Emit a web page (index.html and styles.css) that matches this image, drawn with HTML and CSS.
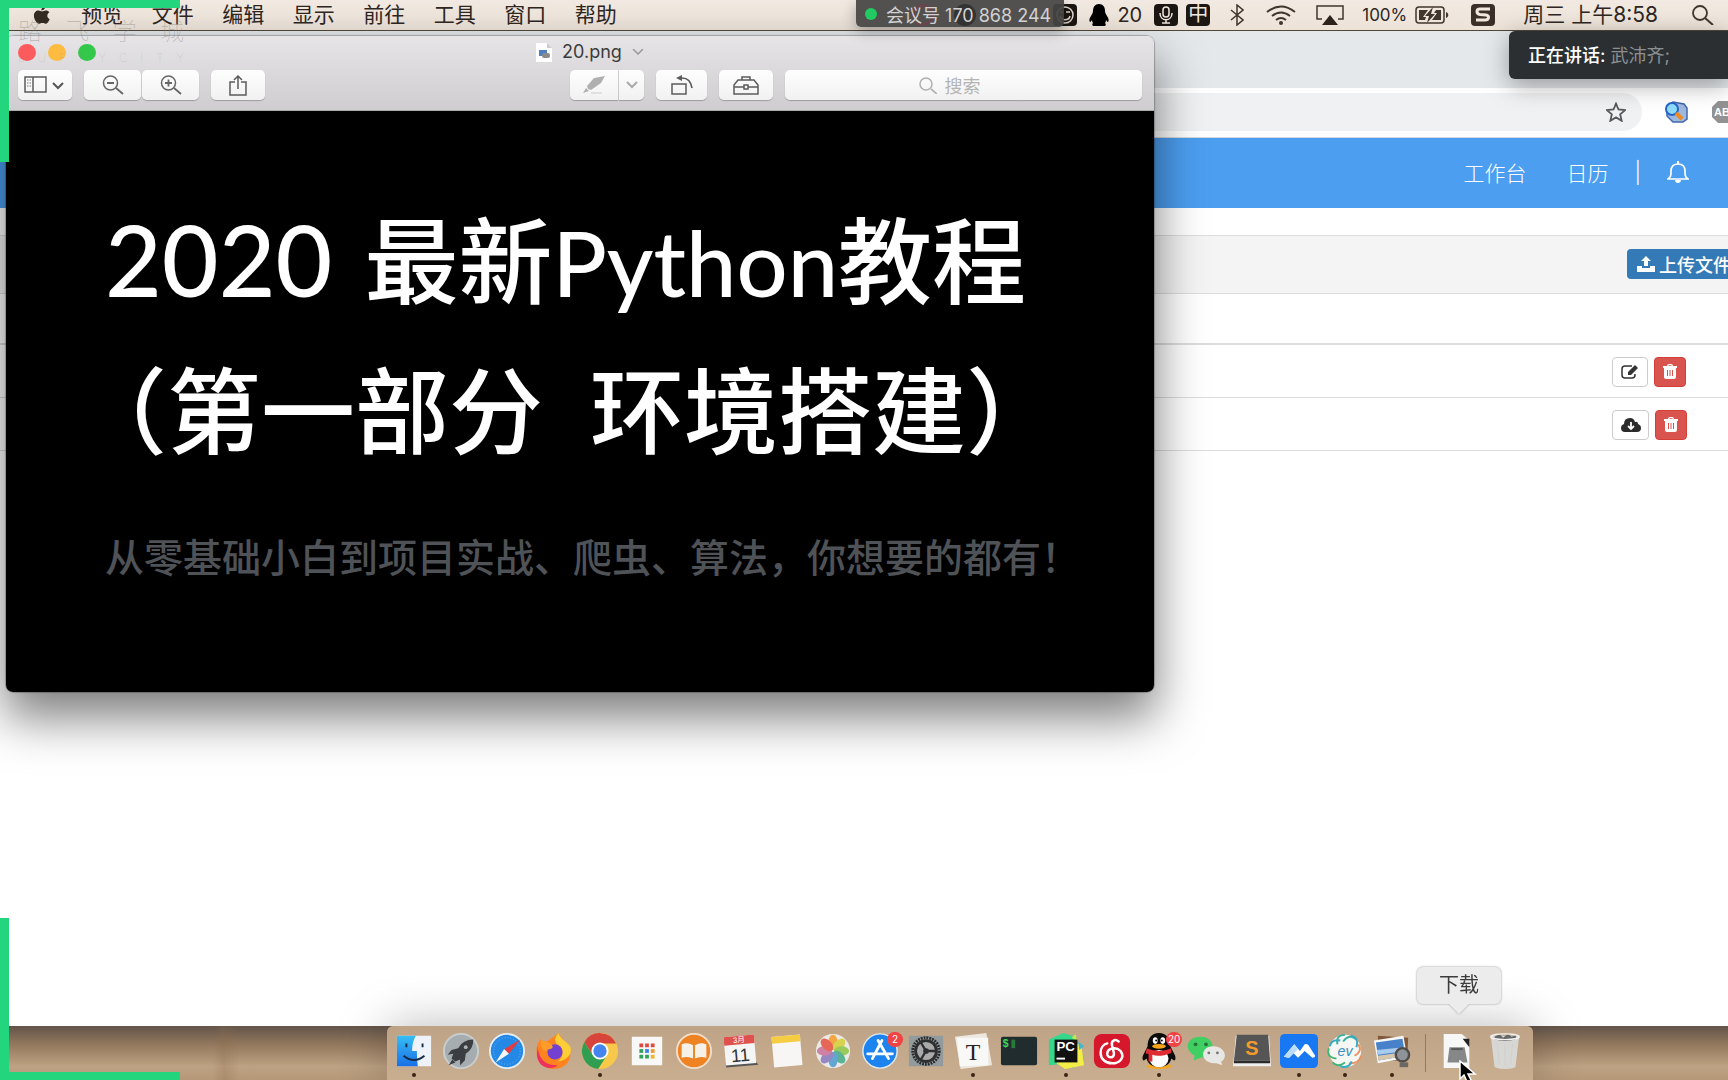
FILE: index.html
```html
<!DOCTYPE html>
<html lang="zh-CN">
<head>
<meta charset="utf-8">
<title>20.png</title>
<link rel="stylesheet" href="styles.css">
</head>
<body>
<div class="desktop">
  <header class="menubar">
    <svg class="apple" viewBox="0 0 20 20"><path d="M13.6 0c.2 1.600-.5 2.800-1.300 3.700-.8.800-1.900 1.400-3 1.300-.1-1.400.5-2.600 1.300-3.400C11.300.700 12.600.100 13.600 0zM18.500 14.600c-.9 2.200-2.500 5.200-4.600 5.200-1.200 0-1.700-.8-3.400-.8s-2.200.8-3.300.8C4.400 19.800 1 14.800 1 10.700c0-3.500 2.400-5.700 5.100-5.700 1.600 0 2.800 1 3.900 1s2.500-1.100 4.400-1.100c1.500 0 2.900.7 3.800 2-3.300 2-2.800 6.400.3 7.700z"/></svg>
    <nav class="menus">
      <button>预览</button><button>文件</button><button>编辑</button><button>显示</button><button>前往</button><button>工具</button><button>窗口</button><button>帮助</button>
    </nav>
    <div class="status">
      <svg width="24" height="22" viewBox="0 0 24 22"><rect width="24" height="22" rx="4" fill="#1c1712"/><circle cx="12" cy="11" r="8" fill="none" stroke="#e8dfd5" stroke-width="1.500"/><path d="M7 12c1 5 9 5 10 0M13 8h4M7 8h3" fill="none" stroke="#e8dfd5" stroke-width="1.500"/></svg>
      <svg class="g12" width="20" height="22" viewBox="0 0 20 22"><path fill="#000" d="M10 0c4 0 6 3 6 7 0 2 1 3 2 5 2 3 2 5 1 6-1 0-1-1-2-2 0 2-1 3-1 3 1 1 1 2 0 3H4c-1-1-1-2 0-3 0 0-1-1-1-3-1 1-1 2-2 2-1-1-1-3 1-6 1-2 2-3 2-5 0-4 2-7 6-7z"/></svg>
      <span class="g8 latin">20</span>
      <svg class="g12" width="24" height="22" viewBox="0 0 24 22"><rect width="24" height="22" rx="4" fill="#1c1712"/><rect x="9" y="3" width="6" height="10" rx="3" fill="none" stroke="#f0e8df" stroke-width="1.500"/><path d="M6 9c0 9 12 9 12 0M12 16v3M8 19h8" fill="none" stroke="#f0e8df" stroke-width="1.500"/></svg>
      <span class="g8 ime">中</span>
      <svg class="g20" width="14" height="22" viewBox="0 0 14 22"><path d="M1 6l12 10-6 5V1l6 5L1 16" fill="none" stroke="#40362e" stroke-width="1.500"/></svg>
      <svg class="g24" width="30" height="20" viewBox="0 0 30 20"><path d="M1 7Q15-4 29 7M6 11q9-7 18 0M10 15q5-4 10 0" fill="none" stroke="#40362e" stroke-width="2"/><circle cx="15" cy="18" r="2" fill="#40362e"/></svg>
      <svg class="g20" width="28" height="20" viewBox="0 0 28 20"><path d="M6 14H1V1h26v13h-5" fill="none" stroke="#40362e" stroke-width="1.500"/><path d="M14 10l8 10H6z" fill="#2b231c"/></svg>
      <span class="g16 percent">100%</span>
      <svg class="g8" width="34" height="18" viewBox="0 0 34 18"><rect x="1" y="1" width="28" height="16" rx="3" fill="none" stroke="#40362e" stroke-width="1.500"/><path d="M4 4h9l-5 7h3l-1 3H4zM21 4h5v10h-9l5-7h-3z" fill="#40362e"/><path d="M18 1l-8 9h4l-2 7 8-9h-4z" fill="#40362e"/><path d="M31 6c3 1 3 5 0 6z" fill="#40362e"/></svg>
      <svg class="g24" width="24" height="22" viewBox="0 0 24 22"><rect width="24" height="22" rx="4" fill="#3a3029"/><path d="M19 5H9c-4 0-4 5 0 5.500l6 .5c4 .500 3 5-1 5H5" fill="none" stroke="#f0e8df" stroke-width="3"/></svg>
      <span class="g28 clock">周三 上午8:58</span>
      <svg class="g34" width="22" height="20" viewBox="0 0 22 20"><circle cx="8" cy="8" r="7" fill="none" stroke="#40362e" stroke-width="1.800"/><path d="M13 13l8 7" stroke="#40362e" stroke-width="2"/></svg>
    </div>
  </header>

  <main class="browser">
    <div class="tabstrip"></div>
    <div class="addressbar">
      <div class="omnibox"><svg width="20" height="20" viewBox="0 0 24 24"><path d="M12 2l3 7 8 .700-6 5.200 1.800 7.600L12 18.500l-6.800 4L7 14.900 1 9.700 9 9z" fill="none" stroke="#55585c" stroke-width="2.200"/></svg></div>
      <svg class="ext" width="24" height="22" viewBox="0 0 24 22"><path d="M3 5l6-4 11 2 3 4v11l-4 3H9l-6-6z" fill="#9fb9de" stroke="#3f69ad" stroke-width="1.500"/><circle cx="8" cy="8" r="6" fill="#8edcfa" stroke="#2563c9" stroke-width="2"/><path d="M12 12l6 6" stroke="#ed8a22" stroke-width="4"/></svg>
      <svg class="abp" width="24" height="22" viewBox="0 0 24 22"><path d="M6 0h12l6 6v10l-6 6H6l-6-6V6z" fill="#929292"/><text x="2" y="15" font-size="11" font-weight="700" fill="#fff">ABP</text></svg>
    </div>
    <nav class="sitebar">
      <a href="#">工作台</a><a class="cal" href="#">日历</a><span class="bar">|</span>
      <button aria-label="通知"><svg width="22" height="22" viewBox="0 0 22 22"><path d="M1 18c3-2 3-4 3-8 0-5 3-7 7-7s7 2 7 7c0 4 0 6 3 8z" fill="none" stroke="#fff" stroke-width="1.700"/><path d="M8 19h6c0 4-6 4-6 0zM10 0h2v3h-2z" fill="#fff"/></svg></button>
    </nav>
    <section class="panel">
      <div class="panel-head">
        <button class="upload"><svg width="18" height="16" viewBox="0 0 18 16"><path d="M9 0l5 5h-3v5H7V5H4zM0 10h5v2h8v-2h5v6H0z" fill="#fff"/></svg>上传文件</button>
      </div>
      <table class="files">
        <thead><tr><th></th><th class="ops"></th></tr></thead>
        <tbody>
          <tr><td></td><td class="ops"><div class="acts"><button aria-label="编辑"><svg width="18" height="16" viewBox="0 0 18 16"><path d="M11 2H4Q1 2 1 5v6q0 3 3 3h7q3 0 3-3v-1" fill="none" stroke="#333" stroke-width="1.500"/><path d="M7 8l7-7 3 3-7 7H7z" fill="#333"/></svg></button><button class="del" aria-label="删除"><svg width="14" height="15" viewBox="0 0 14 15"><path d="M4 2q0-2 2-2h2q2 0 2 2h4v2h-1v9q0 2-2 2H3q-2 0-2-2V4H0V2zm1.500 0h3V1.300h-3z" fill="#fff"/><path d="M4.500 6v6M7 6v6M9.500 6v6" stroke="#d9534f"/></svg></button></div></td></tr>
          <tr><td></td><td class="ops"><div class="acts"><button class="wide" aria-label="下载"><svg width="20" height="14" viewBox="0 0 20 14"><path d="M4 14q-4 0-4-4 0-3 3-4 0-6 6-6 4 0 5 4 3-1 3 2 3 1 3 4 0 4-4 4z" fill="#2b2b2b"/><path d="M10 4v6M7 8l3 3 3-3" stroke="#fff" stroke-width="1.800" fill="none"/></svg></button><button class="del" aria-label="删除"><svg width="14" height="15" viewBox="0 0 14 15"><path d="M4 2q0-2 2-2h2q2 0 2 2h4v2h-1v9q0 2-2 2H3q-2 0-2-2V4H0V2zm1.500 0h3V1.300h-3z" fill="#fff"/><path d="M4.500 6v6M7 6v6M9.500 6v6" stroke="#d9534f"/></svg></button></div></td></tr>
        </tbody>
      </table>
    </section>
  </main>
  <div class="wallpaper"></div>

  <section class="preview">
    <div class="chrome">
      <div class="titlebar">
        <div class="lights"><button class="red" aria-label="关闭"></button><button class="amber" aria-label="最小化"></button><button class="green" aria-label="缩放"></button></div>
        <div class="title"><svg width="16" height="19" viewBox="0 0 16 19"><path d="M0 0h11l5 5v14H0z" fill="#fff"/><path d="M11 0v5h5z" fill="#ccc"/><rect x="3" y="7" width="8" height="6" fill="#4c80c0"/><rect x="6" y="10" width="8" height="5" rx="2" fill="#8b8b8b"/></svg><span>20.png</span><svg width="12" height="6" viewBox="0 0 12 6"><path d="M1 0l5 5 5-5" fill="none" stroke="#999" stroke-width="1.500"/></svg></div>
      </div>
      <div class="toolbar">
        <button class="tb" aria-label="边栏"><svg width="42" height="18" viewBox="0 0 42 18"><path d="M1 1h21v15H1zM9 1v15" fill="none" stroke="#5b5b5b" stroke-width="1.500"/><path d="M3 4h4M3 7h4M3 10h4" stroke="#777" stroke-dasharray="1.500 1"/><path d="M29 7l5 5 5-5" fill="none" stroke="#555" stroke-width="2"/></svg></button>
        <div class="pair">
          <button class="tb zoomer" aria-label="缩小"><svg width="22" height="20" viewBox="0 0 22 20"><circle cx="8.500" cy="8" r="7" fill="none" stroke="#666" stroke-width="1.500"/><path d="M5 8h7M14 13l7 6" stroke="#666" stroke-width="1.800"/></svg></button>
          <button class="tb zoomer" aria-label="放大"><svg width="22" height="20" viewBox="0 0 22 20"><circle cx="8.500" cy="8" r="7" fill="none" stroke="#666" stroke-width="1.500"/><path d="M5 8h7M8.500 4.500v7M14 13l7 6" stroke="#666" stroke-width="1.800"/></svg></button>
        </div>
        <button class="tb" aria-label="共享"><svg width="18" height="21" viewBox="0 0 18 21"><path d="M6 7H1v13h16V7h-5M9 14V2M5 5l4-4 4 4" fill="none" stroke="#5b5b5b" stroke-width="1.500"/></svg></button>
        <div class="pair right">
          <button class="tb pen" aria-label="高亮"><svg width="22" height="18" viewBox="0 0 22 18"><path d="M22 0L11 2 4 10l1 3 3 1L18 7zM3 12l-3 5 6-2z" fill="#b0b0b0"/><path d="M8 17h11" stroke="#ccc"/></svg></button>
          <button class="tb drop" aria-label="更多"><svg width="12" height="8" viewBox="0 0 12 8"><path d="M1 1l5 5 5-5" fill="none" stroke="#aaa" stroke-width="2"/></svg></button>
        </div>
        <button class="tb rotate" aria-label="旋转"><svg width="22" height="20" viewBox="0 0 22 20"><path d="M1 9h14v10H1z" fill="none" stroke="#5b5b5b" stroke-width="1.500"/><path d="M11 3c6 0 9 4 10 10" fill="none" stroke="#5b5b5b" stroke-width="1.700"/><path d="M11 0v6L5 3z" fill="#5b5b5b"/></svg></button>
        <button class="tb" aria-label="标记"><svg width="26" height="19" viewBox="0 0 26 19"><path d="M1 18V9l4-5h16l4 5v9zM1 11h10M15 11h10M9 4V1h8v3M11 9h4v4h-4z" fill="none" stroke="#5b5b5b" stroke-width="1.500"/></svg></button>
        <label class="search"><svg width="18" height="17" viewBox="0 0 18 17"><circle cx="7" cy="7" r="6" fill="none" stroke="#b0b0b0" stroke-width="1.500"/><path d="M12 12l6 5" stroke="#b0b0b0" stroke-width="1.700"/></svg><input type="text" placeholder="搜索" aria-label="搜索"></label>
      </div>
    </div>
    <div class="slide">
      <h1><span class="year">2020</span>最新<span class="word">Python</span>教程</h1>
      <h1 class="second">（第一部分&ensp;环境搭建）</h1>
      <p>从零基础小白到项目实战、爬虫、算法，你想要的都有！</p>
    </div>
  </section>

  <div class="meeting"><i class="ghost one"></i><i class="ghost two"></i><i class="dot"></i><span>会议号 170 868 244</span></div>
  <div class="talking"><b>正在讲话:</b> 武沛齐;</div>
  <div class="frame top"></div>
  <div class="frame bottom"></div>
  <div class="mark"><div><span>路</span><span>飞</span><span>学</span><span>城</span></div><div class="small"><span>L</span><span>U</span><span>F</span><span>F</span><span>Y</span><span>C</span><span>I</span><span>T</span><span>Y</span></div></div>

  <nav class="dock">
    <div class="apps">
      <button class="on" aria-label="访达"><svg viewBox="0 0 40 40"><defs><linearGradient id="bl" x2="0" y2="1"><stop stop-color="#35bdf5"/><stop offset="1" stop-color="#1a70e6"/></linearGradient></defs><path d="M2 4h36v32H2z" fill="#eef3fa"/><path d="M2 4h20c-3 5-4 10-4 16h5q0 9 1 16H2z" fill="url(#bl)"/><path d="M12 12v4M29 12v4M9 25q11 9 22 0" stroke="#152a45" stroke-width="2" fill="none"/></svg></button>
      <button aria-label="启动台"><svg viewBox="0 0 40 40"><circle cx="20" cy="20" r="18" fill="#a6adb0" stroke="#c9cfd0" stroke-width="2"/><path d="M33 8q-11 0-16 9l-7 2-4 5 6-1-2 5 4 3 5-2 0 6 5-5 1-7q8-5 8-15zM11 29l-4 6 7-3z" fill="#3b3e40"/><circle cx="25" cy="16" r="2" fill="#b1b4b5"/></svg></button>
      <button aria-label="Safari"><svg viewBox="0 0 40 40"><circle cx="20" cy="20" r="18" fill="#2489e6" stroke="#e4edf4" stroke-width="2"/><circle cx="20" cy="20" r="14" fill="none" stroke="#68b7f1" stroke-dasharray="1 2"/><path d="M34 8L22 23l-5-5z" fill="#e63b40"/><path d="M8 32l9-14 5 5z" fill="#f5f5f5"/></svg></button>
      <button aria-label="Firefox"><svg viewBox="0 0 40 40"><path d="M25 1c2 5 5 7 8 11 9 11 3 27-13 27C6 39-2 26 3 12l3-5 2 5 6-3z" fill="#ff8420"/><path d="M25 1c-5 5-5 9-1 13 6 4 7 12 0 17 14-2 18-14 9-20C30 8 26 6 25 1z" fill="#ffce35"/><path d="M3 14c0 9 4 22 21 21-7 6-22 3-22-12z" fill="#ee315c"/><circle cx="21" cy="21" r="8" fill="#7440cf"/><path d="M6 9c7 0 15 5 12 8-3 2-6 0-6 4-5-3-7-7-6-12z" fill="#ff9c28"/></svg></button>
      <button class="on" aria-label="Chrome"><svg viewBox="0 0 40 40"><circle cx="20" cy="20" r="19" fill="#f8c84b"/><path d="M3.500 10.500A19 19 0 0 1 37 12H20a9 9 0 0 0-8 12z" fill="#d7443b"/><path d="M3.500 10.500A19 19 0 0 0 18 39l9-14-15-1z" fill="#2f9e51"/><circle cx="20" cy="20" r="9" fill="#fff"/><circle cx="20" cy="20" r="7" fill="#4384ef"/></svg></button>
      <button aria-label="应用"><svg viewBox="0 0 40 40"><path d="M4 5h32v30H4z" fill="#f8f8f8"/><g stroke-width="4" fill="none" stroke-dasharray="4 2"><path d="M12 14h16" stroke="#df4b43"/><path d="M12 20h4" stroke="#32a15b"/><path d="M18 20h4" stroke="#3d82e8"/><path d="M24 20h4" stroke="#ef9a30"/><path d="M12 26h10" stroke="#32a15b"/><path d="M24 26h4" stroke="#efb430"/></g></svg></button>
      <button aria-label="图书"><svg viewBox="0 0 40 40"><circle cx="20" cy="20" r="18" fill="#ef8222" stroke="#f0dfce" stroke-width="2"/><path d="M19 14q-6-4-12-1v14q7-2 12 1zM21 14q6-4 12-1v14q-7-2-12 1z" fill="#f5f1e9"/></svg></button>
      <button aria-label="日历"><svg viewBox="0 0 40 40"><g transform="rotate(-5 20 20)"><path d="M4 36h34l-3-5H4z" fill="#555"/><path d="M4 4h32v30H4z" fill="#f5f5f5"/><path d="M4 4h32v9H4z" fill="#df514d"/><text x="20" y="11" font-size="8" fill="#fff" text-anchor="middle">3月</text><text x="20" y="31" font-size="19" fill="#333" text-anchor="middle">11</text></g></svg></button>
      <button aria-label="备忘录"><svg viewBox="0 0 40 40"><g transform="rotate(-5 20 20)"><path d="M5 4h30v32H5z" fill="#f7f6f4"/><path d="M5 4h30v7H5z" fill="#f5cc42"/></g></svg></button>
      <button aria-label="照片"><svg viewBox="0 0 40 40"><circle cx="20" cy="20" r="18" fill="#eceae6"/><g opacity=".85"><ellipse cx="20" cy="11" rx="5" ry="8" fill="#f69a28"/><ellipse cx="20" cy="11" rx="5" ry="8" fill="#d5ce35" transform="rotate(45 20 20)"/><ellipse cx="20" cy="11" rx="5" ry="8" fill="#8cc445" transform="rotate(90 20 20)"/><ellipse cx="20" cy="11" rx="5" ry="8" fill="#42a987" transform="rotate(135 20 20)"/><ellipse cx="20" cy="11" rx="5" ry="8" fill="#4c9ad0" transform="rotate(180 20 20)"/><ellipse cx="20" cy="11" rx="5" ry="8" fill="#8977be" transform="rotate(225 20 20)"/><ellipse cx="20" cy="11" rx="5" ry="8" fill="#c87099" transform="rotate(270 20 20)"/><ellipse cx="20" cy="11" rx="5" ry="8" fill="#e5513f" transform="rotate(315 20 20)"/></g></svg></button>
      <button aria-label="App Store"><svg viewBox="0 0 40 40"><circle cx="20" cy="20" r="18" fill="#1d83ee" stroke="#e1e9ee" stroke-width="1.500"/><path d="M22 9L12 28M18 9l11 19M7 23h26" stroke="#fff" stroke-width="3" stroke-linecap="round"/></svg><span class="badge">2</span></button>
      <button aria-label="系统偏好设置"><svg viewBox="0 0 40 40"><path d="M2 4h36v32H2z" fill="#939a9d"/><circle cx="20" cy="20" r="14" fill="#aaa" stroke="#292b2c" stroke-width="3" stroke-dasharray="2 1"/><circle cx="20" cy="20" r="11" fill="none" stroke="#2d2f30" stroke-width="3"/><path d="M20 20h11M20 20l-6-10M20 20l-6 10" stroke="#2d2f30" stroke-width="2.500"/><circle cx="20" cy="20" r="3" fill="#2d2f30"/></svg></button>
      <button class="on" aria-label="Typora"><svg viewBox="0 0 40 40"><path d="M1 5l33-4 6 34-33 4z" fill="#ede8df"/><path d="M3 6h33v29l-30 1z" fill="#f8f8f6"/><text x="20" y="29" font-size="25" fill="#222" text-anchor="middle" class="serif">T</text></svg></button>
      <button aria-label="终端"><svg viewBox="0 0 40 40"><rect x="1" y="5" width="38" height="30" rx="2" fill="#202c2d"/><text x="3" y="16" font-size="11" font-weight="700" fill="#37db55">$</text><path d="M12 8h4v9h-4z" fill="#277a39"/></svg></button>
      <button class="on" aria-label="PyCharm"><svg viewBox="0 0 40 40"><path d="M2 8L17 1l13 4 9 24-12 9-15-4-10 1z" fill="#35d78b"/><path d="M26 6l4-4 2 8z" fill="#bfe850"/><path d="M27 12l9 1 3 22-20 4-9-6z" fill="#f2ee47"/><path d="M33 10l6 5-5 4z" fill="#37b9da"/><path d="M8 8h24v24H8z" fill="#111"/><text x="10" y="20" font-size="14" font-weight="700" fill="#fff">PC</text><path d="M10 28h9" stroke="#fff" stroke-width="2"/></svg></button>
      <button aria-label="网易云音乐"><svg viewBox="0 0 40 40"><rect x="1" y="2" width="38" height="36" rx="8" fill="#d6182d"/><path d="M27 10c-4-3-8-1-7 4l2 8c1 6-7 6-7 1 0-6 9-8 14-3 5 7-1 13-9 13-7 0-12-5-12-11 0-5 3-9 7-10" fill="none" stroke="#fff" stroke-width="2.600" stroke-linecap="round"/></svg></button>
      <button class="on" aria-label="QQ"><svg viewBox="0 0 40 40"><ellipse cx="20" cy="36" rx="13" ry="3" fill="#f4a71e"/><path d="M20 1c8 0 12 6 12 14l5 10c1 4 0 7-4 3-2 12-24 12-26 0-4 4-5 1-4-3l5-10C8 7 12 1 20 1z" fill="#0b0b0b"/><ellipse cx="20" cy="28" rx="10" ry="9" fill="#fafafa"/><path d="M7 17q13 6 26 0v5q-13 5-20 2v7H9v-8H6z" fill="#df2b32"/><ellipse cx="16" cy="9" rx="2.500" ry="3.500" fill="#fff"/><ellipse cx="24" cy="9" rx="2.500" ry="3.500" fill="#fff"/><circle cx="17" cy="9" r="1"/><circle cx="23" cy="9" r="1"/><ellipse cx="20" cy="15" rx="7" ry="2.500" fill="#f7a61b"/></svg><span class="badge">20</span></button>
      <button aria-label="微信"><svg viewBox="0 0 40 40"><path d="M14 5c18 0 17 22 0 22l-7 3 1-5C-5 17 1 5 14 5z" fill="#40cf63"/><path d="M27 15c14 0 16 13 9 16l1 4-6-2c-19 0-17-18-4-18z" fill="#e7e7e5"/><g fill="#27723a"><circle cx="9" cy="13" r="2"/><circle cx="20" cy="13" r="2"/></g><g fill="#777"><circle cx="23" cy="22" r="1.500"/><circle cx="32" cy="22" r="1.500"/></g></svg></button>
      <button aria-label="Sublime Text"><svg viewBox="0 0 40 40"><path d="M3 4h35l2 32H0z" fill="#eee"/><path d="M4 3h33l2 27H1z" fill="#555"/><path d="M1 30h38v3H1z" fill="#2a2a2a"/><text x="20" y="24" font-size="21" font-weight="800" fill="#f49b2d" text-anchor="middle">S</text></svg></button>
      <button class="on" aria-label="腾讯会议"><svg viewBox="0 0 40 40"><rect x="0" y="2" width="40" height="36" rx="5" fill="#1877f2"/><path d="M4 26l11-13 6 7 5-7q2-1 4 1l7 11q0 2-3 2l-8-7-7 7-5-5-5 5z" fill="#fff"/><path d="M4 26l11-13 4 5-9 9z" fill="#badcff"/></svg></button>
      <button class="on" aria-label="EV录屏"><svg viewBox="0 0 40 40"><circle cx="20" cy="20" r="17" fill="#f5f7f5"/><g fill="none" stroke-width="2"><path d="M20 3q-10 0-8 10M32 8q-7-7-14 2" stroke="#3cb19d"/><path d="M3 17q-3 10 8 11M7 32q5 6 13 0" stroke="#42b574"/><path d="M34 13q5 7-4 12M37 25q-3 9-13 8" stroke="#ec9261"/><path d="M26 4q9 2 6 12M4 15q2-8 11-6M15 36q9 3 12-5" stroke="#36abc1"/></g><text x="20" y="25" font-size="15" font-style="italic" text-anchor="middle" fill="#388ec1">ev</text></svg></button>
      <button class="on" aria-label="预览"><svg viewBox="0 0 40 40"><path d="M5 4l32 2-1 24H7z" fill="#80583a"/><path d="M1 9l31-5 4 23-31 6z" fill="#f7f7f7"/><path d="M3 11l28-4 3 18-28 5z" fill="#4681ca"/><path d="M4 19l29-3 1 4-29 4z" fill="#a9cbed"/><path d="M5 25l29-4v4L6 30z" fill="#d6c6ac"/><circle cx="31" cy="24" r="7" fill="#8d9398" stroke="#4f4c49" stroke-width="2.500"/><path d="M28 32h9v5h-9z" fill="#6b6763"/></svg></button>
    </div>
    <div class="tray">
      <button aria-label="下载"><svg viewBox="0 0 40 40"><path d="M6 2h19l8 7v29H6z" fill="#f7f7f7"/><path d="M26 7h7v9z" fill="#222"/><path d="M12 16h16l3 16H10z" fill="#858789"/><path d="M14 18h12" stroke="#555" stroke-width="2"/></svg></button>
      <button aria-label="废纸篓"><svg viewBox="0 0 40 40"><path d="M5 4h30l-4 33q-11 4-22 0z" fill="#d9dcdc" opacity=".9"/><path d="M9 5l5-3 4 4 5-4 4 3 5-2-1 5q-11 3-22 0z" fill="#656866"/><ellipse cx="20" cy="5" rx="15" ry="3" fill="none" stroke="#f3f3f3" stroke-width="1.500"/><path d="M12 12l2 22M20 12v23M28 12l-2 22" stroke="#cdd0d0"/></svg></button>
    </div>
  </nav>
  <div class="tooltip">下载</div>
  <svg class="cursor" width="20" height="26" viewBox="0 0 20 26"><path d="M1 1v18l4-4 4 9 4-2-4-8h7z" fill="#000" stroke="#fff" stroke-width="1.500"/></svg>
</div>
</body>
</html>
```
FILE: styles.css
```css
* { box-sizing: border-box; }
body { margin: 0; font-family: Inter, "Noto Sans CJK SC", sans-serif; color: #2e261f; }
button { border: 0; padding: 0; margin: 0; background: none; font: inherit; color: inherit; }
svg { display: block; flex: none; }
svg text { font-family: "Liberation Sans", "Noto Sans CJK SC", sans-serif; }
svg text.serif { font-family: "Liberation Serif", serif; }

.desktop { position: relative; display: flex; flex-direction: column; min-height: 100vh; overflow: hidden; }

/* menu bar */
.menubar { display: flex; align-items: center; height: 31px; padding: 0 14px 0 32px; background: linear-gradient(#f2eae2, #ece2d8); border-bottom: 1px solid #524636; font-size: 21px; line-height: 28px; }
.apple { width: 20px; height: 18px; fill: #352c24; margin-right: 15px; }
.menus { display: flex; width: 564px; }
.menus button { flex: 1; }
.status { display: flex; align-items: center; margin-left: auto; white-space: nowrap; }
.latin { font-size: 20px; }
.percent { font-size: 17px; }
.clock { font-size: 21px; }
.ime { width: 24px; height: 22px; border-radius: 4px; background: #1c1712; color: #f0e8df; font-size: 20px; line-height: 21px; text-align: center; }
.g8 { margin-left: 8px; }
.g12 { margin-left: 12px; }
.g16 { margin-left: 18px; }
.g20 { margin-left: 20px; }
.g24 { margin-left: 22px; }
.g28 { margin-left: 28px; }
.g34 { margin-left: 34px; }

/* browser window */
.browser { flex: 1; background: #fff; }
.tabstrip { height: 57px; background: #e5e8eb; }
.addressbar { display: flex; align-items: center; height: 50px; padding-bottom: 1px; background: #fff; border-bottom: 1px solid #d5d8dc; }
.omnibox { display: flex; flex: 1; align-items: center; justify-content: flex-end; height: 38px; padding-right: 16px; border-radius: 0 19px 19px 0; background: #f0f1f2; }
.ext { margin: 0 24px 0 22px; }
.abp { margin-right: -8px; }
.sitebar { display: flex; align-items: center; justify-content: flex-end; height: 70px; padding: 0 39px 2px 0; background: #4c9ef0; color: #fff; font-size: 21px; font-weight: 300; }
.sitebar a { color: inherit; text-decoration: none; }
.cal { margin-left: 40px; }
.bar { margin: 0 26px; }
.panel { margin-top: 27px; border-top: 1px solid #ddd; }
.panel-head { display: flex; align-items: center; justify-content: flex-end; height: 58px; padding-bottom: 2px; background: #f4f4f4; border-bottom: 1px solid #ddd; }
.upload { display: flex; flex: none; align-items: center; gap: 4px; height: 30px; padding: 0 10px; margin-right: -13px; border-radius: 4px; background: #337ab7; color: #fff; font-size: 18px; font-weight: 500; }
.files { width: 100%; border-collapse: collapse; }
.files th { height: 50px; padding: 0; border-bottom: 2px solid #ddd; }
.files td { height: 53px; padding: 2px 0 0; border-bottom: 1px solid #ddd; }
.files .ops { width: 116px; }
.acts { display: flex; gap: 6px; }
.acts button { display: grid; place-items: center; width: 36px; height: 30px; border: 1px solid #ccc; border-radius: 4px; background: #fff; }
.acts .wide { width: 37px; }
.acts .del { width: 32px; border-color: #d43f3a; background: #d9534f; }

.wallpaper { height: 54px; background: linear-gradient(90deg, transparent 212px, #8a6a4a44 224px, transparent 240px), linear-gradient(#62544a, #94795e 35%, #bda283 75%, #b59878); }

/* preview window */
.preview { position: absolute; left: 6px; top: 36px; width: 1148px; border-radius: 8px; box-shadow: 0 24px 48px 2px rgba(0,0,0,.5), 0 0 1px 1px rgba(0,0,0,.25); }
.chrome { height: 75px; padding: 0 12px; border-radius: 7px 7px 0 0; border-bottom: 1px solid #aaa; background: linear-gradient(#e6e4e6, #cfcdcf); }
.titlebar { display: grid; grid-template-columns: 1fr auto 1fr; align-items: center; height: 32px; }
.lights { display: flex; gap: 12px; }
.lights button { width: 18px; height: 17px; border-radius: 50%; }
.red { background: #fc5b5d; }
.amber { background: #fdbc3f; }
.green { background: #34c84a; }
.title { display: flex; align-items: center; gap: 10px; grid-column: 2; padding-left: 20px; font-size: 18px; line-height: 24px; color: #3c3c3c; }
.toolbar { display: flex; align-items: center; gap: 12px; padding-top: 2px; }
.tb { display: grid; place-items: center; width: 54px; height: 30px; border-radius: 5px; background: linear-gradient(#fefefe, #f1f1f1); box-shadow: 0 1px 1px rgba(0,0,0,.25); }
.rotate { width: 51px; }
.pair { display: flex; gap: 1px; }
.pair .zoomer { width: 57px; }
.right { margin-left: auto; }
.pair .pen { width: 48px; border-radius: 5px 0 0 5px; }
.pair .drop { width: 25px; border-radius: 0 5px 5px 0; }
.search { display: flex; align-items: center; justify-content: center; gap: 8px; width: 357px; height: 30px; padding-right: 24px; border-radius: 5px; background: linear-gradient(#fefefe, #f1f1f1); box-shadow: 0 1px 1px rgba(0,0,0,.25); }
.search input { width: 40px; padding: 0; border: 0; background: none; font: 18px/24px "Noto Sans CJK SC", sans-serif; }
.search input::placeholder { color: #b4b4b4; opacity: 1; }
.slide { height: 581px; padding: 70px 0 0 99px; border-radius: 0 0 7px 7px; background: #000; color: #fff; white-space: nowrap; }
.slide h1 { height: 150px; margin: 0; font: 500 94px/150px "Noto Sans CJK SC", sans-serif; }
.slide span { font-family: Lato, sans-serif; font-weight: 500; }
.slide .year { margin-right: 32px; font-size: 98px; line-height: 100px; }
.slide .word { font-size: 90px; line-height: 100px; }
.slide .second { margin-left: -32px; }
.slide p { margin: 44px 0 0; font: 500 39px/60px "Noto Sans CJK SC", sans-serif; color: #4f5256; }

/* overlays */
.meeting { position: absolute; left: 856px; top: 0; display: flex; align-items: center; gap: 9px; width: 208px; height: 27px; padding-left: 9px; border-radius: 0 0 5px 5px; background: rgba(70,69,68,.93); box-shadow: 0 4px 14px rgba(0,0,0,.3); color: #d2d2d2; font-size: 18px; white-space: nowrap; }
.dot { width: 12px; height: 12px; border-radius: 50%; background: #21cb62; }
.meeting span { position: relative; }
.ghost { position: absolute; top: 4px; width: 22px; height: 22px; border-radius: 50%; }
.one { left: 56px; border: 3px solid #68454a; }
.two { left: 98px; background: #333; }
.talking { position: absolute; right: 0; top: 31px; width: 219px; height: 48px; padding-left: 19px; border-radius: 6px 0 0 6px; background: #2b2f32; box-shadow: 0 6px 24px rgba(0,0,0,.35); color: #8c9092; font-size: 18px; line-height: 50px; white-space: nowrap; }
.talking b { color: #fff; font-weight: 500; }
.frame { position: absolute; left: 0; width: 180px; height: 162px; border-left: 9px solid #23d57c; pointer-events: none; }
.frame.top { top: 0; border-top: 8px solid #23d57c; }
.frame.bottom { bottom: 0; border-bottom: 8px solid #23d57c; }
.mark { position: absolute; left: 18px; top: 18px; width: 166px; color: rgba(130,130,130,.45); font-size: 24px; line-height: 28px; font-weight: 100; pointer-events: none; }
.mark div { display: flex; justify-content: space-between; }
.mark .small { font-size: 12px; line-height: 24px; }

/* dock */
.dock { position: absolute; left: 387px; bottom: 0; display: flex; width: 1146px; height: 54px; padding: 0 4px; border-radius: 6px 6px 0 0; background: linear-gradient(#bea386, #c9ae90); box-shadow: 0 0 50px rgba(0,0,0,.28); }
.apps { display: flex; flex: 1; }
.apps button, .tray button { position: relative; flex: 1; padding-top: 6px; }
.dock button { display: flex; justify-content: center; align-items: flex-start; }
.dock svg { width: 38px; height: 38px; }
.dock .on::after { content: ""; position: absolute; left: calc(50% - 2px); bottom: 3px; width: 4px; height: 4px; border-radius: 50%; background: #3a2413; }
.badge { position: absolute; right: 0; top: 6px; min-width: 16px; height: 15px; padding: 0 2px; border-radius: 8px; background: #ef4345; color: #fff; font-size: 10px; line-height: 15px; text-align: center; }
.tray { display: flex; width: 104px; margin: 0 0 0 10px; padding-left: 8px; position: relative; }
.tray::before { content: ""; position: absolute; left: 0; top: 8px; width: 1px; height: 38px; background: #927960; }
.tooltip { position: absolute; left: 1417px; bottom: 76px; width: 84px; height: 37px; border-radius: 6px; background: #ececec; color: #3c3c3c; font-size: 20px; line-height: 37px; text-align: center; filter: drop-shadow(0 0 1px #999); }
.tooltip::after { content: ""; position: absolute; left: 31px; top: 36px; border: 11px solid transparent; border-top-color: #ececec; border-bottom: 0; }
.cursor { position: absolute; left: 1459px; bottom: -6px; }
```
